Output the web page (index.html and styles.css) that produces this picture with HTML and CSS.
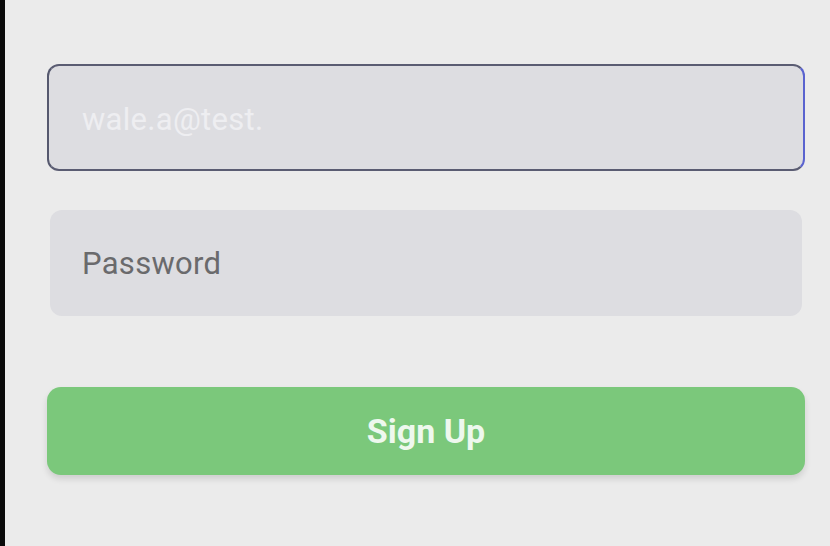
FILE: index.html
```html
<!DOCTYPE html>
<html>
<head>
<meta charset="utf-8">
<link rel="stylesheet" href="styles.css">
</head>
<body>
<div class="frame">
  <div class="edge"></div>
  <div class="content">
    <div class="field field-active"><span class="ph ph-light">wale.a@test.</span></div>
    <div class="field field-plain"><span class="ph ph-dark">Password</span></div>
    <button class="btn">Sign Up</button>
  </div>
</div>
</body>
</html>
```
FILE: styles.css
```css
html, body {
  margin: 0;
  padding: 0;
  width: 830px;
  height: 546px;
  overflow: hidden;
  background: #ebebeb;
  font-family: Roboto, "Liberation Sans", sans-serif;
}
.frame {
  display: flex;
  height: 546px;
}
.edge {
  width: 5px;
  background: #0a0a0a;
  flex: none;
}
.content {
  flex: 1;
  display: flex;
  flex-direction: column;
  padding: 64px 25px 0 42px;
}
.field {
  box-sizing: border-box;
  display: flex;
  align-items: center;
  background: #dddde1;
  border-radius: 12px;
}
.field-active {
  height: 107px;
  border: 2px solid #5a5c72;
  border-right-color: #5a63cf;
  border-left-color: #55586e;
  padding: 3px 0 0 33px;
}
.field-plain {
  height: 106px;
  margin: 39px 3px 0 3px;
  padding-left: 32px;
}
.ph {
  font-size: 31px;
  letter-spacing: 0.3px;
}
.ph-light {
  color: #eeeef1;
}
.ph-dark {
  color: #6a6a6c;
}
.btn {
  margin-top: 71px;
  height: 88px;
  border: none;
  border-radius: 14px;
  background: #7bc87b;
  color: #eef8ee;
  font-family: Roboto, "Liberation Sans", sans-serif;
  font-size: 34px;
  font-weight: 700;
  box-shadow: 0 4px 6px rgba(0,0,0,0.12);
  padding: 0;
}
```
